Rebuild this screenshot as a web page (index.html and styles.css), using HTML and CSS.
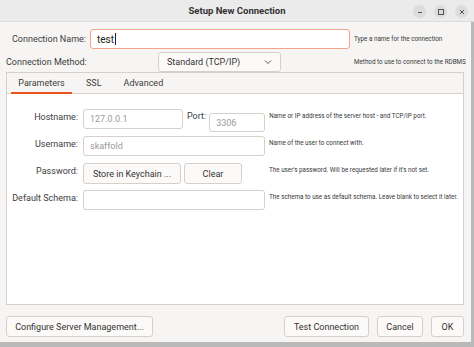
FILE: index.html
```html
<!DOCTYPE html>
<html>
<head>
<meta charset="utf-8">
<link rel="stylesheet" href="styles.css">
</head>
<body>
<div class="window">
  <div class="titlebar">
    <span class="title">Setup New Connection</span>
    <div class="controls">
      <span class="ctl"><svg width="10" height="10" viewBox="0 0 10 10"><path d="M3 5.5h4" stroke="#555" stroke-width="1"/></svg></span>
      <span class="ctl"><svg width="10" height="10" viewBox="0 0 10 10"><rect x="2.5" y="2.5" width="5" height="5" fill="none" stroke="#555" stroke-width="1"/></svg></span>
      <span class="ctl"><svg width="10" height="10" viewBox="0 0 10 10"><path d="M3 3l4 4M7 3l-4 4" stroke="#555" stroke-width="1"/></svg></span>
    </div>
  </div>
  <div class="content">
    <div class="row row-name">
      <label class="lbl lbl-name">Connection Name:</label>
      <div class="input focus">test<span class="caret"></span></div>
      <span class="help">Type a name for the connection</span>
    </div>
    <div class="row row-method">
      <label class="lbl lbl-method">Connection Method:</label>
      <div class="select"><span>Standard (TCP/IP)</span><svg width="8" height="6" viewBox="0 0 8 6"><path d="M1 1.5l3 3 3-3" fill="none" stroke="#555" stroke-width="1"/></svg></div>
      <span class="help">Method to use to connect to the RDBMS</span>
    </div>
    <div class="panel">
      <div class="tabs">
        <span class="tab active">Parameters</span>
        <span class="tab">SSL</span>
        <span class="tab">Advanced</span>
      </div>
      <div class="page">
        <div class="prow">
          <label class="plbl">Hostname:</label>
          <div class="input ph w-host">127.0.0.1</div>
          <label class="port-lbl">Port:</label>
          <div class="input ph w-port">3306</div>
          <span class="help phelp">Name or IP address of the server host - and TCP/IP port.</span>
        </div>
        <div class="prow">
          <label class="plbl">Username:</label>
          <div class="input ph w-full">skaffold</div>
          <span class="help phelp">Name of the user to connect with.</span>
        </div>
        <div class="prow">
          <label class="plbl">Password:</label>
          <button class="btn w-store">Store in Keychain ...</button>
          <button class="btn w-clear">Clear</button>
          <span class="help phelp pw-help">The user's password. Will be requested later if it's not set.</span>
        </div>
        <div class="prow">
          <label class="plbl">Default Schema:</label>
          <div class="input w-full"></div>
          <span class="help phelp">The schema to use as default schema. Leave blank to select it later.</span>
        </div>
      </div>
    </div>
    <div class="footer">
      <button class="btn w-config">Configure Server Management...</button>
      <div class="spacer"></div>
      <button class="btn w-test">Test Connection</button>
      <button class="btn w-cancel">Cancel</button>
      <button class="btn w-ok">OK</button>
    </div>
  </div>
</div>
</body>
</html>
```
FILE: styles.css
```css
* { box-sizing: border-box; }
html, body { margin: 0; padding: 0; }
body {
  width: 474px;
  height: 347px;
  background: #b9b9b9;
  font-family: Roboto, "Noto Sans", sans-serif;
  font-size: 9px;
  color: #3d3d3d;
  overflow: hidden;
  white-space: nowrap;
}
.window {
  width: 471px;
  height: 342px;
  background: #f6f5f4;
  display: flex;
  flex-direction: column;
}
.titlebar {
  height: 22px;
  flex: none;
  background: #ebebeb;
  border-bottom: 1px solid #dcdcdc;
  display: flex;
  align-items: center;
  justify-content: center;
  position: relative;
  width: 474px;
}
.title {
  font-weight: bold;
  font-size: 9.5px;
  color: #333;
}
.controls {
  position: absolute;
  right: 6px;
  top: 5px;
  display: flex;
  gap: 8px;
}
.ctl {
  width: 13px;
  height: 13px;
  border-radius: 50%;
  background: #dcdcdc;
  display: flex;
  align-items: center;
  justify-content: center;
}
.content {
  flex: 1;
  display: flex;
  flex-direction: column;
  padding: 7px 7px 5px 6px;
}
.row {
  display: flex;
  align-items: center;
}
.row > * { flex: none; }
.lbl { color: #3d3d3d; }
.lbl-name { width: 80px; text-align: right; margin-right: 4px; }
.lbl-method { width: 152px; margin-right: 0; }
.row-method { margin-top: 3px; }
.help {
  font-family: Roboto, "Noto Sans", sans-serif;
  font-size: 6.3px;
  color: #383838;
  margin-left: 4px;
}
.input {
  height: 20px;
  background: #fff;
  border: 1px solid #d5d0cc;
  border-radius: 3px;
  display: flex;
  align-items: center;
  padding-left: 6px;
  color: #333;
  flex: none;
}
.input.focus {
  width: 260px;
  border-color: #f0a48a;
  font-size: 10px;
  color: #222;
}
.caret {
  display: inline-block;
  width: 1px;
  height: 12px;
  background: #222;
  margin-left: 1px;
}
.select {
  width: 123px;
  height: 20px;
  background: #fbfaf9;
  border: 1px solid #d5d0cc;
  border-radius: 3px;
  display: flex;
  align-items: center;
  justify-content: space-between;
  padding: 0 8px 0 8px;
  color: #333;
}
.row-method .help { margin-left: 73px; }
.panel {
  margin-top: 0;
  width: 458px;
  height: 233px;
  flex: none;
  border: 1px solid #d5d0cc;
  display: flex;
  flex-direction: column;
  background: #fff;
}
.tabs {
  height: 21px;
  background: #f6f5f4;
  border-bottom: 1px solid #d5d0cc;
  display: flex;
  align-items: stretch;
  padding-left: 4px;
}
.tab {
  display: flex;
  align-items: center;
  padding: 0 11px;
  color: #3d3d3d;
  border-bottom: 2px solid transparent;
  margin-bottom: -1px;
}
.tab.active {
  border-bottom-color: #e95420;
  width: 61px;
  justify-content: center;
  padding: 0;
  margin-right: 3px;
}
.page {
  flex: 1;
  padding-top: 15px;
  display: flex;
  flex-direction: column;
  gap: 6px;
}
.prow {
  display: flex;
  align-items: flex-start;
  height: 21px;
}
.prow > * { flex: none; }
.plbl {
  width: 71px;
  text-align: right;
  margin-right: 5px;
  padding-top: 3px;
}
.ph { color: #999; }
.w-host { width: 100px; }
.port-lbl { margin: 0 3px 0 4px; padding-top: 2px; }
.w-port { width: 56px; margin-top: 4px; height: 19px; }
.w-full { width: 182px; }
.phelp { margin-left: 4px; padding-top: 3px; }
.pw-help { margin-left: 27px; }
.btn {
  font-family: inherit;
  font-size: 9px;
  color: #333;
  background: #fbfaf9;
  border: 1px solid #d5d0cc;
  border-radius: 3px;
  height: 21px;
  padding: 0;
  white-space: nowrap;
}
.w-store { width: 98px; }
.w-clear { width: 58px; margin-left: 3px; }
.footer {
  margin-top: 11px;
  display: flex;
  align-items: center;
}
.spacer { flex: 1; }
.w-config { width: 147px; }
.w-test { width: 85px; }
.w-cancel { width: 46px; margin-left: 8px; }
.w-ok { width: 33px; margin-left: 8px; }
```
